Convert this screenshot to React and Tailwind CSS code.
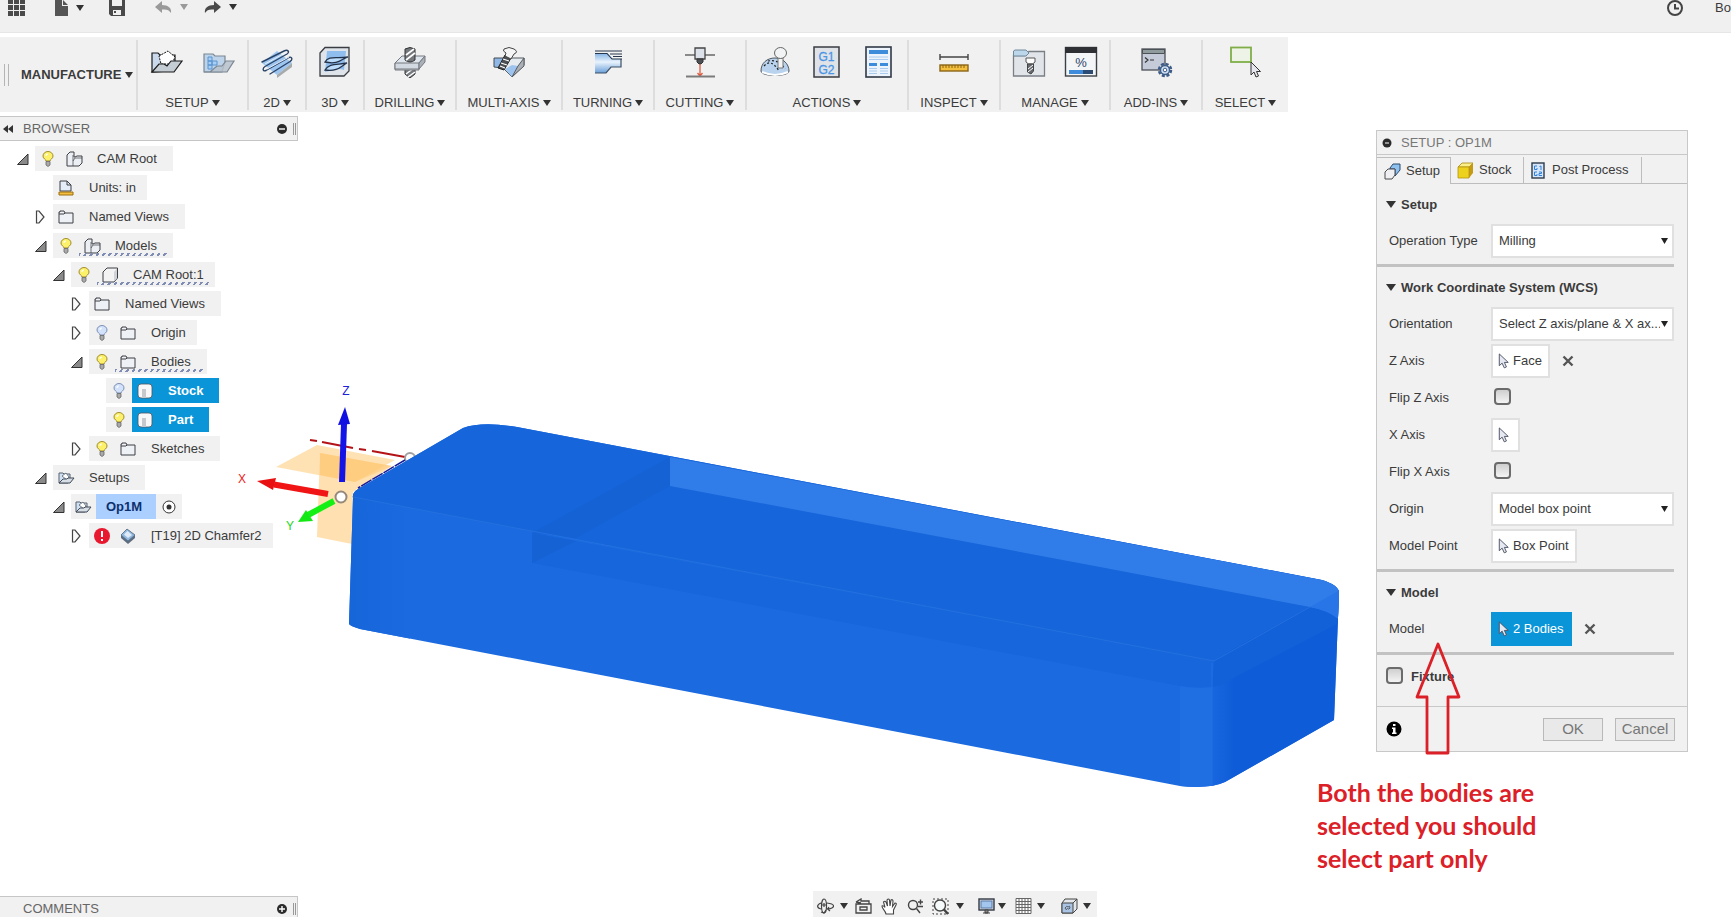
import React from 'react';

const Caret = ({ className = 'h-[6px] w-[8px] fill-[#333]' }) => (
  <svg viewBox="0 0 8 6" preserveAspectRatio="none" className={`shrink-0 ${className}`} aria-hidden="true">
    <path d="M0 0H8L4 6Z" />
  </svg>
);

const Cursor = ({ className = 'h-4 w-3' }) => (
  <svg viewBox="0 0 12 17" className={`shrink-0 ${className}`} aria-hidden="true">
    <path d="M1 1V13.5L4 10.8L6.3 15.8L8.6 14.8L6.4 10H10.5Z" fill="#e6e9f2" stroke="#4b5163" />
  </svg>
);

/* ---------- ribbon icons ---------- */

const NewSetupIcon = () => (
  <svg viewBox="0 0 34 32" className="h-8 w-[34px]" aria-hidden="true">
    <path d="M2 26V7H8L10 9H25V15L20 25Z" fill="#c9d8ea" stroke="#1b1b1b" strokeWidth="1.2" />
    <path d="M9 10L18 5L25 11L22 18H11Z" fill="#fff" stroke="#111" strokeDasharray="2 1" />
    <path d="M2 26L9 18H14L17 20L21 15H32L24 26Z" fill="#c4ccd4" stroke="#1b1b1b" strokeWidth="1.2" />
  </svg>
);

const FolderGridIcon = () => (
  <svg viewBox="0 0 34 32" className="h-8 w-[34px]" aria-hidden="true">
    <path d="M2 26V8H11L13 10H23V16L20 26Z" fill="#bdd3ea" stroke="#7b8794" strokeWidth="1.2" />
    <path d="M6 11H10V15H6ZM6 15H10V19H6ZM10 15H15V19H10ZM6 19H10V23H6Z" fill="#a9cdf3" stroke="#5b94d0" />
    <path d="M2 26H8L15 20H20L24 15H32L25 26Z" fill="#b7c1cb" fillOpacity=".85" stroke="#7b8794" strokeWidth="1.2" />
  </svg>
);

const Milling2DIcon = () => (
  <svg viewBox="0 0 32 32" className="h-8 w-8" aria-hidden="true">
    <path d="M1 17L16 5L31 17L16 29Z" fill="#9dc5f0" />
    <path d="M16 29L31 17V21L16 32Z" fill="#a7abab" />
    <g fill="none" stroke="#2a4468" strokeWidth="1.4" strokeLinecap="round">
      <path d="M1 16L23 5C27 3 29 6 26 8L4 20.500C1 22.500 2 26 5 24.500L28 11.500C31 10 32 14 29 15.500L9 28" />
    </g>
    <path d="M4 18L24 7M6 23L28 11" stroke="#eef5ff" strokeWidth=".9" />
  </svg>
);

const Milling3DIcon = () => (
  <svg viewBox="0 0 32 32" className="h-8 w-8" aria-hidden="true">
    <path d="M1 7L6 1.500H30V25L25 30H1Z" fill="#dfe4ea" stroke="#3a3d42" strokeWidth="1.3" />
    <path d="M8 5H27L25 24C18 21 12 25 6 26Z" fill="#8fbdee" />
    <path d="M6 16C10 9 17 13 29 11C22 13 20 19 6 16ZM6 24C10 17 18 19 28 17C22 20 19 26 6 24Z" fill="#bcdcfb" stroke="#22324a" strokeWidth="1.3" />
  </svg>
);

const DrillIcon = () => (
  <svg viewBox="0 0 32 32" className="h-8 w-8" aria-hidden="true">
    <path d="M11 21H21V28L16 32L11 28Z" fill="#777b80" stroke="#333" />
    <path d="M12 28L20 22M14 31L21 26" stroke="#fff" strokeWidth="1.4" />
    <path d="M1 17L8 10H31L25 17V24H1Z" fill="#dfe6ee" stroke="#74797f" />
    <path d="M1 17H25V23H1Z" fill="#d3d9e0" stroke="#74797f" />
    <path d="M25 17L31 10V16L25 23Z" fill="#a9b0b8" stroke="#74797f" />
    <path d="M11 3Q16 0 21 3V14Q16 18 11 14Z" fill="#74787d" stroke="#333" />
    <path d="M12 9L20 3M12 14L21 7" stroke="#fff" strokeWidth="1.6" />
  </svg>
);

const MultiAxisIcon = () => (
  <svg viewBox="0 0 32 32" className="h-8 w-8" aria-hidden="true">
    <path d="M1 12H12L16 22H10L1 21Z" fill="#8fb8e6" stroke="#444a52" />
    <path d="M10 22L17 12H31V19L19 31Z" fill="#e6ebf0" stroke="#555a60" />
    <path d="M12 23L19 19L25 20L19 31Z" fill="#9cc4ee" />
    <path d="M31 12L25 20L19 31L31 20Z" fill="#aab0b6" stroke="#555a60" />
    <path d="M12 9L18 12L11 24L5 22Z" fill="#4d5054" stroke="#222" />
    <path d="M8 17L14 19M7 20L12 22M10 13L16 15" stroke="#fff" strokeWidth="1.2" />
    <path d="M11 3Q16 0 21 3Q26 6 21 8L18 13L12 10L13 7Q9 5 11 3Z" fill="#f5f5f5" stroke="#444" />
  </svg>
);

const TurningIcon = () => (
  <svg viewBox="0 0 30 32" className="h-8 w-[30px]" aria-hidden="true">
    <defs>
      <linearGradient id="bar" x1="0" y1="0" x2="0" y2="1">
        <stop offset="0" stopColor="#7fb0e3" />
        <stop offset=".45" stopColor="#e9f3fd" />
        <stop offset="1" stopColor="#6a9fd8" />
      </linearGradient>
    </defs>
    <path d="M2 7H14L20 13H28V21H18L13 27H2Z" fill="url(#bar)" />
    <path d="M2 27H13L18 21H28V13" fill="none" stroke="#3f5166" strokeWidth="1.2" />
    <path d="M2 5H29M2 7.500H14L19 13H29M17 8H29M20 10.500H29" fill="none" stroke="#26364c" strokeWidth="1.1" />
  </svg>
);

const CuttingIcon = () => (
  <svg viewBox="0 0 32 32" className="h-8 w-8" aria-hidden="true">
    <path d="M1 9H31" stroke="#444" strokeWidth="1.2" />
    <path d="M11 2H21V13H11Z" fill="#dde1ea" stroke="#444" strokeWidth="1.3" />
    <path d="M13 13H19V16L17 18H15L13 16Z" fill="#4c4f55" stroke="#333" />
    <path d="M16 18V30M13.500 27L16 30L18.500 27" fill="none" stroke="#df5b40" strokeWidth="1.3" />
    <path d="M2 30.500H31" stroke="#7b7b7b" strokeWidth="2" />
  </svg>
);

const SimulateIcon = () => (
  <svg viewBox="0 0 32 32" className="h-8 w-8" aria-hidden="true">
    <path d="M2 25C2 17 8 12 16 12S30 18 30 25C30 31 2 31 2 25Z" fill="#b9d3ee" stroke="#50565e" />
    <path d="M3 26Q16 32 29 26" fill="none" stroke="#fff" strokeWidth="2" />
    <path d="M5 20Q12 12 20 25M9 15Q20 13 26 23" fill="none" stroke="#222" strokeWidth="1.2" strokeDasharray="2 2" />
    <path d="M19 12H24V22H19Z" fill="#f4f4f4" stroke="#777" />
    <ellipse cx="21.500" cy="7" rx="6" ry="5.500" fill="#f1f3f5" stroke="#666" />
  </svg>
);

const PostIcon = () => (
  <svg viewBox="0 0 28 32" className="h-8 w-7" aria-hidden="true">
    <rect x="1" y="1" width="25" height="30" fill="#dfe3e8" stroke="#3a3d42" strokeWidth="1.5" />
    <text x="13.500" y="14.500" textAnchor="middle" fontSize="12" fill="#4a94e6" stroke="#4a94e6" strokeWidth=".3">
      G1
    </text>
    <text x="13.500" y="27.500" textAnchor="middle" fontSize="12" fill="#4a94e6" stroke="#4a94e6" strokeWidth=".3">
      G2
    </text>
  </svg>
);

const SheetIcon = () => (
  <svg viewBox="0 0 28 32" className="h-8 w-7" aria-hidden="true">
    <rect x="1" y="1" width="25" height="30" fill="#edf3fa" stroke="#2f3946" strokeWidth="1.6" />
    <path d="M4 4H23V8H4ZM4 17H12V20H4ZM15 17H23V20H15Z" fill="#3d8cdc" />
    <path d="M4 11H23M4 13.500H23M4 22.500H12M4 25H12M4 27.500H12M15 22.500H23M15 25H23M15 27.500H23" stroke="#a9cbef" strokeWidth="1.2" />
  </svg>
);

const MeasureIcon = () => (
  <svg viewBox="0 0 32 32" className="h-8 w-8" aria-hidden="true">
    <path d="M2 8V14M30 8V14M2 11H30" stroke="#444" strokeWidth="1.4" fill="none" />
    <rect x="2" y="19" width="28" height="6" fill="#f4bf3c" stroke="#8a6416" strokeWidth="1.4" />
    <path d="M5 19V22M8 19V22M11 19V22M14 19V22M17 19V22M20 19V22M23 19V22M26 19V22" stroke="#8a6416" />
  </svg>
);

const ToolLibraryIcon = () => (
  <svg viewBox="0 0 34 32" className="h-8 w-[34px]" aria-hidden="true">
    <path d="M1.500 9.500H13L17 5.500H32.500V30H1.500Z" fill="#e1e5e9" stroke="#7a7f86" strokeWidth="1.3" />
    <path d="M1.500 5L3 4H14L17 7L14 10H1.500Z" fill="#bcd6ea" stroke="#70889c" />
    <path d="M14 12H23V16L20.500 18H16.500L14 16Z" fill="#fff" stroke="#555" />
    <path d="M15.500 18H21.500V25L19 28L15.500 26Z" fill="#666a6f" stroke="#444" />
    <path d="M16 23L21 19M16 26L21 22" stroke="#fff" />
  </svg>
);

const PercentIcon = () => (
  <svg viewBox="0 0 34 32" className="h-8 w-[34px]" aria-hidden="true">
    <rect x="1.500" y="1.500" width="31" height="28.500" fill="#f3f5f7" stroke="#3d4147" strokeWidth="1.4" />
    <path d="M1 1H33V7H1Z" fill="#2e3035" />
    <text x="17" y="21" textAnchor="middle" fontSize="13" fill="#2c4668">
      %
    </text>
    <path d="M5 24H19V28H5Z" fill="#3f8bdb" />
    <path d="M19 24H29V28H19Z" fill="#2c4c74" />
  </svg>
);

const AddInsIcon = () => (
  <svg viewBox="0 0 34 32" className="h-8 w-[34px]" aria-hidden="true">
    <rect x="3" y="3" width="23" height="21" fill="#c5cbd9" stroke="#4c5158" strokeWidth="1.3" />
    <path d="M3.500 3.500H25.500V7.500H3.500Z" fill="#8f9b9c" stroke="#4c5158" />
    <path d="M6 11.500L9 14L6 16.500M11 14H15" fill="none" stroke="#333" strokeWidth="1.2" />
    <circle cx="26" cy="24" r="6" fill="none" stroke="#3d5c86" strokeWidth="2.500" strokeDasharray="3 1.700" />
    <circle cx="26" cy="24" r="4.500" fill="#cfe0f5" stroke="#3d5c86" strokeWidth="1.400" />
    <circle cx="26" cy="24" r="1.800" fill="#fff" stroke="#3d5c86" />
  </svg>
);

const SelectIcon = () => (
  <svg viewBox="0 0 34 32" className="h-8 w-[34px]" aria-hidden="true">
    <rect x="2" y="1.500" width="20" height="14.500" fill="#eef3e8" stroke="#7fae48" strokeWidth="1.800" />
    <path d="M22 16V29L25 26L27 31L29.500 30L27.500 25.500H31.500Z" fill="#e6e6ee" stroke="#333" />
  </svg>
);

const ribbon = [
  { label: 'SETUP', width: 'w-[111px]', icons: [NewSetupIcon, FolderGridIcon] },
  { label: '2D', width: 'w-[58px]', icons: [Milling2DIcon] },
  { label: '3D', width: 'w-[58px]', icons: [Milling3DIcon] },
  { label: 'DRILLING', width: 'w-[92px]', icons: [DrillIcon] },
  { label: 'MULTI-AXIS', width: 'w-[106px]', icons: [MultiAxisIcon] },
  { label: 'TURNING', width: 'w-[92px]', icons: [TurningIcon] },
  { label: 'CUTTING', width: 'w-[92px]', icons: [CuttingIcon] },
  { label: 'ACTIONS', width: 'w-[162px]', icons: [SimulateIcon, PostIcon, SheetIcon] },
  { label: 'INSPECT', width: 'w-[92px]', icons: [MeasureIcon] },
  { label: 'MANAGE', width: 'w-[110px]', icons: [ToolLibraryIcon, PercentIcon] },
  { label: 'ADD-INS', width: 'w-[92px]', icons: [AddInsIcon] },
  { label: 'SELECT', width: 'w-[87px]', icons: [SelectIcon] },
];

const QuickBar = () => (
  <header className="flex h-[33px] items-start border-b border-[#e6e6e6] bg-[#f0f0f0] pl-2">
    <button aria-label="Data panel" className="w-[17px]">
      <svg viewBox="0 0 17 16" className="h-4 w-[17px] fill-[#4a4a4a]">
        <path d="M0 0H5V4H0ZM6 0H11V4H6ZM12 0H17V4H12ZM0 5H5V10H0ZM6 5H11V10H6ZM12 5H17V10H12ZM0 11H5V16H0ZM6 11H11V16H6ZM12 11H17V16H12Z" />
      </svg>
    </button>
    <button aria-label="File" className="ml-[30px] flex items-center gap-2">
      <svg viewBox="0 0 13 16" className="h-4 w-[13px] fill-[#555]">
        <path d="M0 0H7V6H13V16H0ZM8 0L13 5H8Z" />
      </svg>
      <Caret />
    </button>
    <button aria-label="Save" className="ml-[25px]">
      <svg viewBox="0 0 16 16" className="h-4 w-4">
        <path d="M0 0H16V16H2L0 14Z" fill="#4a4a4a" />
        <path d="M3 0H13V6H3ZM4 10H12V15H4Z" fill="#f0f0f0" />
        <path d="M5 11H7V13H5Z" fill="#4a4a4a" />
      </svg>
    </button>
    <button aria-label="Undo" className="ml-[30px] flex items-center gap-2">
      <svg viewBox="0 0 17 14" className="h-[14px] w-[17px] fill-[#999]">
        <path d="M0 7L7 1V5C13 5 17 8 16 13C14 10 12 9 7 9.500V13Z" />
      </svg>
      <Caret className="h-[6px] w-[8px] fill-[#999]" />
    </button>
    <button aria-label="Redo" className="ml-4 flex items-center gap-2">
      <svg viewBox="0 0 17 14" className="h-[14px] w-[17px] fill-[#4a4a4a]">
        <path d="M17 7L10 1V5C4 5 0 8 1 13C3 10 5 9 10 9.500V13Z" />
      </svg>
      <Caret />
    </button>
    <div className="ml-auto flex items-start gap-8">
      <button aria-label="Job status">
        <svg viewBox="0 0 16 16" className="h-4 w-4 fill-none stroke-[#444] stroke-2">
          <circle cx="8" cy="8" r="7" />
          <path d="M8 4V8.500H12" />
        </svg>
      </button>
      <span className="text-[13px] leading-4">Bo</span>
    </div>
  </header>
);

const Ribbon = () => (
  <div className="mt-1 flex h-[75px] w-fit bg-[#f1f1f1]">
    <div className="flex w-[136px] items-center pl-1">
      <span className="h-[22px] w-[5px] border-x border-[#b5b5b5]" />
      <button className="ml-3 flex items-center gap-1 pt-px text-[13px] font-bold">
        MANUFACTURE
        <Caret />
      </button>
    </div>
    {ribbon.map(({ label, width, icons }) => (
      <div key={label} className={`mt-[3px] mb-[2px] flex flex-col items-center justify-between border-l-2 border-[#dddddd] pt-[6px] ${width}`}>
        <div className="flex gap-[18px]">
          {icons.map((Icon, i) => (
            <button key={i} aria-label={`${label} ${i + 1}`} className="flex w-[34px] justify-center">
              <Icon />
            </button>
          ))}
        </div>
        <button className="flex items-center gap-[3px] text-[13px] leading-[14px]">
          {label}
          <Caret />
        </button>
      </div>
    ))}
  </div>
);

/* ---------- browser tree ---------- */

const Bulb = ({ off }) => (
  <svg viewBox="0 0 12 16" className="h-4 w-3 shrink-0" aria-hidden="true">
    <path d="M4 10C4 8 1 8 1 5A5 4.500 0 0 1 11 5C11 8 8 8 8 10Z" fill={off ? '#d3e2fb' : '#fdf06a'} stroke={off ? '#7d8eb5' : '#a08d2e'} />
    <path d="M4 10.500H8V14L6 15.500L4 14Z" fill="#aaa" stroke="#666" strokeWidth=".8" />
    <path d="M4 5Q4 3 6 3" fill="none" stroke="#fff" strokeWidth="1.2" />
  </svg>
);

const treeIcons = {
  component: (
    <>
      <path d="M1 4L4 1H8V6L9 6L11 5H16V12L13 15H1Z" fill="#eceff4" stroke="#3c3f44" />
      <path d="M7 10L9 7H16M7 4V15" fill="none" stroke="#3c3f44" strokeWidth=".7" />
    </>
  ),
  units: (
    <>
      <path d="M2 1H9L13 5V11H2Z" fill="#e4edf8" stroke="#3c3f44" />
      <path d="M9 1V5H13" fill="none" stroke="#3c3f44" />
      <path d="M1 12H15V15H1Z" fill="#f4bf3c" stroke="#9a6d10" />
    </>
  ),
  folder: <path d="M1 14V3H2V2H6L7 4H15V14H1M1 5H6L7 4" fill="#eef1f6" stroke="#3c3f44" />,
  box: (
    <>
      <path d="M1 5L5 1H15.500V11L12 15H1Z" fill="#f3f3f3" stroke="#3c3f44" />
      <path d="M12 5L15 1.500V11L12 14.500Z" fill="#cfd2d6" />
    </>
  ),
  body: (
    <>
      <path d="M1 4Q1 1 4 1H12Q15 1 15 4V12Q15 15 12 15H4Q1 15 1 12Z" fill="#f8f8f8" stroke="#4b5560" strokeWidth=".8" />
      <path d="M5 6H9V15H5Z" fill="#c5c8cc" />
    </>
  ),
  setup: (
    <>
      <path d="M1 13V3H5L6 4H12V8L10 13Z" fill="#cfe0f2" stroke="#56616e" />
      <path d="M4 6L8 3L11 7L9 10Z" fill="#fff" stroke="#56616e" strokeWidth=".8" />
      <path d="M1 13L5 9H9L10 8H16L12 13Z" fill="#d7dee6" stroke="#3f4a56" />
    </>
  ),
  chamfer: (
    <>
      <path d="M1 7L7 1L15 7V10L8 16L1 10Z" fill="#5c6d80" />
      <path d="M1 7L7 1L15 7L8 13Z" fill="#8fb9e3" stroke="#5c6d80" strokeWidth=".8" />
      <path d="M4 6.500L7.500 3L12 7L8 10Z" fill="#dfeaf5" />
    </>
  ),
};

const TreeIcon = ({ name }) => (
  <svg viewBox="0 0 17 16" className="h-4 w-[17px] shrink-0" aria-hidden="true">
    {treeIcons[name]}
  </svg>
);

const Toggle = ({ open, label }) => (
  <button aria-label={`Toggle ${label}`} aria-expanded={open} className="w-[18px] shrink-0">
    {open ? (
      <svg viewBox="0 0 12 12" className="h-3 w-3">
        <path d="M0.500 11.500L11 1V11.500Z" fill="#8a8a8a" stroke="#333" />
      </svg>
    ) : (
      <svg viewBox="0 0 12 14" className="h-[14px] w-3">
        <path d="M1.500 1H4L9 7L4 13H1.500Z" fill="#fafafa" stroke="#444" strokeWidth="1.2" />
      </svg>
    )}
  </button>
);

const rows = [
  { label: 'CAM Root', indent: 'pl-[17px]', open: true, bulb: 'on', icon: 'component' },
  { label: 'Units: in', indent: 'pl-[53px]', icon: 'units', tight: true },
  { label: 'Named Views', indent: 'pl-[35px]', open: false, icon: 'folder' },
  { label: 'Models', indent: 'pl-[35px]', open: true, bulb: 'on', icon: 'component', dashed: true },
  { label: 'CAM Root:1', indent: 'pl-[53px]', open: true, bulb: 'on', icon: 'box', dashed: true, tight: true },
  { label: 'Named Views', indent: 'pl-[71px]', open: false, icon: 'folder' },
  { label: 'Origin', indent: 'pl-[71px]', open: false, bulb: 'off', icon: 'folder', tight: true },
  { label: 'Bodies', indent: 'pl-[71px]', open: true, bulb: 'on', icon: 'folder', dashed: true },
  { label: 'Stock', indent: 'pl-[106px]', bulb: 'off', icon: 'body', selected: true },
  { label: 'Part', indent: 'pl-[106px]', bulb: 'on', icon: 'body', selected: true },
  { label: 'Sketches', indent: 'pl-[71px]', open: false, bulb: 'on', icon: 'folder' },
  { label: 'Setups', indent: 'pl-[35px]', open: true, icon: 'setup' },
  { label: 'Op1M', indent: 'pl-[53px]', open: true, icon: 'setup', active: true },
  { label: '[T19] 2D Chamfer2', indent: 'pl-[71px]', open: false, error: true, icon: 'chamfer', tight: true },
];

const TreeRow = ({ row }) => (
  <li className={`flex h-[25px] items-center ${row.indent}`}>
    {row.open !== undefined && <Toggle open={row.open} label={row.label} />}
    <div className="relative flex h-full items-center bg-[#f1f1f1]">
      {row.bulb && (
        <span className="flex w-[26px] justify-center">
          <Bulb off={row.bulb === 'off'} />
        </span>
      )}
      {row.error && (
        <span className="flex w-[26px] justify-center">
          <svg viewBox="0 0 16 16" className="h-4 w-4" aria-hidden="true">
            <circle cx="8" cy="8" r="8" fill="#e8192f" />
            <path d="M7 3H9V9H7ZM7 11H9V13H7Z" fill="#fff" />
          </svg>
        </span>
      )}
      {row.active ? (
        <>
          <span className="px-1">
            <TreeIcon name={row.icon} />
          </span>
          <a href="#op1m" className="flex h-full items-center bg-[#abd0ff] px-[14px] pl-[10px] font-bold text-[#0d2f6e]">
            {row.label}
          </a>
          <svg viewBox="0 0 14 14" className="mx-[6px] h-[14px] w-[14px]" aria-hidden="true">
            <circle cx="7" cy="7" r="6" fill="#fff" stroke="#333" />
            <circle cx="7" cy="7" r="2.500" fill="#333" />
          </svg>
        </>
      ) : (
        <span
          className={`flex h-full items-center gap-[14px] pl-[5px] ${row.tight ? 'pr-[11px]' : 'pr-4'} ${
            row.selected ? 'bg-[#0a95d9] font-bold text-white' : ''
          }`}
        >
          <TreeIcon name={row.icon} />
          {row.label}
        </span>
      )}
      {row.dashed && (
        <span className="absolute right-1 bottom-[2px] left-[26px] h-[3px] bg-[repeating-linear-gradient(125deg,#7f8db5_0_2px,transparent_2px_5px)]" />
      )}
    </div>
  </li>
);

const RoundButton = ({ label, plus }) => (
  <button aria-label={label} className="ml-auto">
    <svg viewBox="0 0 10 10" className="h-[10px] w-[10px]">
      <circle cx="5" cy="5" r="5" fill="#2b2b2b" />
      <path d={plus ? 'M2 5H8M5 2V8' : 'M2 5H8'} stroke="#fff" strokeWidth="1.4" />
    </svg>
  </button>
);

const Browser = () => (
  <section className="relative mt-1 w-[298px] text-[13px]">
    <div className="flex h-[25px] items-center border border-l-0 border-[#c6c6c6] bg-[#f1f1f1] pl-[3px] text-[#666]">
      <svg viewBox="0 0 10 8" className="h-2 w-[10px] fill-[#333]" aria-hidden="true">
        <path d="M5 0V8L0 4ZM10 0V8L5 4Z" />
      </svg>
      <h2 className="ml-[10px]">BROWSER</h2>
      <RoundButton label="Collapse browser" />
      <span className="mr-px ml-[6px] h-3 w-[3px] border-x border-[#999]" />
    </div>
    <ul className="mt-[5px] flex flex-col gap-1">
      {rows.map((row, i) => (
        <TreeRow key={i} row={row} />
      ))}
    </ul>
  </section>
);

/* ---------- 3D scene ---------- */

const Scene = () => (
  <svg viewBox="0 112 1731 779" className="absolute inset-0 h-full w-full" role="img" aria-label="Model view">
    <defs>
      <linearGradient id="leftEdge" x1="350" x2="410" y1="0" y2="0" gradientUnits="userSpaceOnUse">
        <stop offset="0" stopColor="#1665d9" />
        <stop offset="1" stopColor="#1b6ae0" />
      </linearGradient>
      <linearGradient id="corner" x1="1212" x2="1234" y1="0" y2="0" gradientUnits="userSpaceOnUse">
        <stop offset="0" stopColor="#1967df" />
        <stop offset="1" stopColor="#0f5cd8" />
      </linearGradient>
      <clipPath id="solid">
        <path d="M353 498Q352 493 358 489L463 428Q482 421 517 427L1322 580Q1338 585 1339 592L1334 720L1225 782Q1210 789 1180 786L360 629Q350 626 349 624Z" />
      </clipPath>
    </defs>

    {/* origin planes */}
    <path d="M276 467L317 445L395 460L355 482Z" fill="#ffd28a" fillOpacity=".65" />
    <path d="M320 453L392 466L353 492L352 544L317 537Z" fill="#ffcf85" fillOpacity=".65" />
    <path d="M320 453L392 466L355 482L320 475Z" fill="#ffc060" fillOpacity=".4" />
    <path d="M310 440L317 441M322 442L353 448M359 449L366 450M372 451L405 457" stroke="#b31217" strokeWidth="2" />
    <circle cx="410" cy="458" r="5" fill="#fff" stroke="#a0a0a0" strokeWidth="2" />

    {/* body */}
    <g clipPath="url(#solid)">
      <path d="M340 410H1350V800H340Z" fill="#1b6ae0" />
      <path d="M349 490H410V660H349Z" fill="url(#leftEdge)" />
      <path d="M340 495L353 497L1214 661L1345 588V400H340Z" fill="#1665da" />
      <path d="M532 533L670 457V486L576 538Z" fill="#1562d5" />
      <path d="M532 533L1214 661V687Q1195 689 1180 686L532 563Z" fill="#1766db" />
      <path d="M532 533V563L576 541Z" fill="#1562d5" />
      <path d="M1180 686Q1196 689 1212 687V800H1180Z" fill="#1f6ee2" />
      <path d="M1212 661L1345 587V740L1212 800Z" fill="url(#corner)" />
      <path d="M1214 661L1345 587V620L1235 677Q1222 686 1212 687Z" fill="#1361d8" />
      <path d="M670 457L1322 580L1345 580V622Q1332 611 1310 607L1100 567L670 486Z" fill="#307ce9" />
      <path d="M1310 607L1345 587V625Q1332 611 1310 607Z" fill="#2875e8" />
      <path d="M353 497L1214 661L1310 607" fill="none" stroke="#2470de" />
      <path d="M1212 663V786" stroke="#2571e3" />
    </g>
    <path d="M405 460L358 488" stroke="#161c9a" strokeWidth="1.500" strokeDasharray="12 1" />

    {/* axes */}
    <path d="M342 482L344 424" stroke="#1414e6" strokeWidth="6" />
    <path d="M345 407L338 425L350 424Z" fill="#1010e0" />
    <path d="M328 494L274 484.500" stroke="#f01414" strokeWidth="6" />
    <path d="M257 481L276 478L273 490Z" fill="#e81010" />
    <path d="M334 501L308 515" stroke="#14f014" strokeWidth="6" />
    <path d="M298 522L306 510L313 521Z" fill="#14e814" />
    <circle cx="341" cy="497" r="5.500" fill="#fff" stroke="#94897a" strokeWidth="2" />
    <g fontSize="12" textAnchor="middle">
      <text x="346" y="395" fill="#2020d8">Z</text>
      <text x="242" y="483" fill="#f02020">X</text>
      <text x="290" y="530" fill="#18d818">Y</text>
    </g>
  </svg>
);

/* ---------- setup dialog ---------- */

const SectionTitle = ({ children }) => (
  <h3 className="flex h-10 items-center gap-[5px] pt-px pl-[9px] font-bold">
    <Caret className="h-[7px] w-[10px] fill-[#333]" />
    {children}
  </h3>
);

const Field = ({ label, htmlFor, children }) => (
  <div className="flex h-[34px] items-center">
    <label htmlFor={htmlFor} className="w-[114px] shrink-0 pl-3">
      {label}
    </label>
    {children}
  </div>
);

const Divider = () => <hr className="mt-[6px] mr-[13px] border-t-[3px] border-[#c2c2c2]" />;

const Dropdown = ({ id, value }) => (
  <div className="relative mr-[13px] flex-1">
    <select id={id} className="h-[34px] w-full appearance-none border-2 border-[#e0e0e0] bg-white pr-3 pl-[6px]">
      <option>{value}</option>
    </select>
    <span className="pointer-events-none absolute inset-y-0 right-[6px] flex items-center">
      <Caret className="h-[6px] w-[7px] fill-[#222]" />
    </span>
  </div>
);

const Picker = ({ id, children }) => (
  <button id={id} className="flex h-[34px] min-w-[29px] items-center gap-[3px] border-2 border-[#e0e0e0] bg-white pr-[6px] pl-[5px]">
    <Cursor />
    {children}
  </button>
);

const Clear = ({ label }) => (
  <button aria-label={label} className="ml-3">
    <svg viewBox="0 0 12 12" className="h-3 w-3 stroke-[#555]">
      <path d="M1.500 1.500L10.500 10.500M10.500 1.500L1.500 10.500" strokeWidth="2.400" />
    </svg>
  </button>
);

const Checkbox = ({ id }) => (
  <input
    id={id}
    type="checkbox"
    className="h-[17px] w-[17px] appearance-none rounded-[4px] border-2 border-[#6b6b6b] bg-linear-to-b from-[#cfcfcf] to-[#f4f4f4]"
  />
);

const SetupDialog = () => (
  <section className="ml-auto w-[312px] border border-[#c8c8c8] bg-[#f1f1f1] text-[13px]">
    <div className="flex h-6 items-center border-b border-[#c8c8c8] pl-[5px] text-[#777]">
      <svg viewBox="0 0 10 10" className="h-[10px] w-[10px]" aria-hidden="true">
        <circle cx="5" cy="5" r="4.500" fill="#2b2b2b" />
        <path d="M3 5H7" stroke="#fff" />
      </svg>
      <h2 className="ml-[9px]">SETUP : OP1M</h2>
    </div>
    <div role="tablist" className="flex h-[29px] items-stretch pt-[2px]">
      <button role="tab" aria-selected="true" className="flex w-[74px] items-center gap-[5px] border-t border-r border-[#bdbdbd] pl-[7px]">
        <svg viewBox="0 0 17 17" className="h-[17px] w-[17px]" aria-hidden="true">
          <path d="M6 5L9 1H16V7L11 13V6H6Z" fill="#8ec1ee" stroke="#2c4a6b" />
          <path d="M1 9L4 6H11V12L8 16H1Z" fill="#f0f0f2" stroke="#4a4a50" />
        </svg>
        Setup
      </button>
      <button role="tab" aria-selected="false" className="flex w-[73px] items-center gap-[5px] border-r border-b border-[#bdbdbd] pl-[6px]">
        <svg viewBox="0 0 17 17" className="h-[17px] w-[17px]" aria-hidden="true">
          <path d="M1 5L5 1H16L12 5Z" fill="#faf08a" stroke="#a8860c" strokeWidth=".8" />
          <path d="M12 5L16 1V11L12 16Z" fill="#c79a14" />
          <path d="M1 5H12V16H1Z" fill="#ecd21c" stroke="#b8950f" strokeWidth=".8" />
        </svg>
        Stock
      </button>
      <button role="tab" aria-selected="false" className="flex w-[118px] items-center gap-[7px] border-r border-b border-[#bdbdbd] pl-[7px]">
        <svg viewBox="0 0 14 17" className="h-[17px] w-[14px]" aria-hidden="true">
          <rect x="1" y="1" width="12" height="15" fill="#d6e6f8" stroke="#2d3a4a" strokeWidth="1.400" />
          <path d="M6 4H3.500V7.500H6V6M8.500 4.500L10 4V8M6 10H3.500V13.500H6V12M8 10H10.500V11.500H8V13.500H11" fill="none" stroke="#2f80da" />
        </svg>
        Post Process
      </button>
      <span className="flex-1 border-b border-[#bdbdbd]" />
    </div>

    <SectionTitle>Setup</SectionTitle>
    <Field label="Operation Type" htmlFor="operation">
      <Dropdown id="operation" value="Milling" />
    </Field>
    <Divider />

    <SectionTitle>Work Coordinate System (WCS)</SectionTitle>
    <div className="flex flex-col gap-[3px]">
      <Field label="Orientation" htmlFor="orientation">
        <Dropdown id="orientation" value="Select Z axis/plane &amp; X ax..." />
      </Field>
      <Field label="Z Axis" htmlFor="z-axis">
        <Picker id="z-axis">Face</Picker>
        <Clear label="Clear Z axis" />
      </Field>
      <Field label="Flip Z Axis" htmlFor="flip-z">
        <span className="flex pb-[3px] pl-[3px]">
          <Checkbox id="flip-z" />
        </span>
      </Field>
      <Field label="X Axis" htmlFor="x-axis">
        <Picker id="x-axis" />
      </Field>
      <Field label="Flip X Axis" htmlFor="flip-x">
        <span className="flex pb-[3px] pl-[3px]">
          <Checkbox id="flip-x" />
        </span>
      </Field>
      <Field label="Origin" htmlFor="origin">
        <Dropdown id="origin" value="Model box point" />
      </Field>
      <Field label="Model Point" htmlFor="model-point">
        <Picker id="model-point">Box Point</Picker>
      </Field>
    </div>
    <Divider />

    <SectionTitle>Model</SectionTitle>
    <Field label="Model" htmlFor="model">
      <button id="model" className="flex h-[34px] items-center gap-[3px] bg-[#0a95d9] pr-2 pl-[7px] text-white">
        <Cursor />2 Bodies
      </button>
      <Clear label="Clear model" />
    </Field>
    <Divider />

    <div className="flex h-[51px] items-start gap-2 pt-3 pl-[9px]">
      <Checkbox id="fixture" />
      <label htmlFor="fixture" className="font-bold">
        Fixture
      </label>
    </div>

    <div className="flex h-[45px] items-center border-t border-[#c8c8c8] pr-3 pl-[9px] text-[15px] text-[#777]">
      <svg viewBox="0 0 16 16" className="mr-auto h-4 w-4" aria-hidden="true">
        <circle cx="8" cy="8" r="7.500" fill="#000" />
        <path d="M7 3H9.500V5H7ZM6 6.500H9.500V11.500H10.500V13H6V11.500H7V8H6Z" fill="#fff" />
      </svg>
      <button className="h-[23px] w-[60px] border border-[#b9b9b9] bg-[#e9e9e9] leading-5">OK</button>
      <button className="ml-3 h-[23px] w-[60px] border border-[#b9b9b9] bg-[#e9e9e9] leading-5">Cancel</button>
    </div>
  </section>
);

/* ---------- view controls ---------- */

const NavBar = () => (
  <nav className="flex h-[26px] w-[284px] items-center bg-[#f1f1f1] pt-1 pl-1">
    <button aria-label="Orbit" className="flex items-center gap-[6px]">
      <svg viewBox="0 0 17 16" className="h-4 w-[17px] fill-none stroke-[#444] stroke-[1.2]">
        <ellipse cx="7" cy="8" rx="2.500" ry="7" />
        <path d="M10 5C19 6 18 10 11 11M4 5C-1 7 0 10 4 11M4 14L7 15L9 12M12 9L10.500 11L13 13M7 5V9M5 7H9" />
      </svg>
      <Caret />
    </button>
    <button aria-label="Look at" className="ml-[7px]">
      <svg viewBox="0 0 17 16" className="h-4 w-[17px] fill-none stroke-[#444] stroke-[1.3]">
        <path d="M1 6H16V15H1ZM5 9H12V12H5ZM1 4L6 1V3H14V6M1 4L6 5" />
      </svg>
    </button>
    <button aria-label="Pan" className="ml-[9px]">
      <svg viewBox="0 0 17 17" className="h-[17px] w-[17px] fill-white stroke-[#444] stroke-[1.1]">
        <path d="M5 16C4 12 1 11 1 8Q2 7 4 9.500L2.500 4Q4 2.500 5 4L6.500 8L6 2Q7.500 0 8.500 2L9 8L10 2Q11.500 1 12 3L11.500 8.500L14 5Q16 5 15 7L12.500 12V16Z" />
      </svg>
    </button>
    <button aria-label="Zoom" className="ml-[9px]">
      <svg viewBox="0 0 17 16" className="h-4 w-[17px] fill-none stroke-[#444] stroke-[1.4]">
        <circle cx="6" cy="7" r="4.500" />
        <path d="M9.500 10.500L13 15M11 4H16M13.500 1.500V6.500M11 8.500H16" />
      </svg>
    </button>
    <button aria-label="Zoom window" className="ml-2 flex items-center gap-[6px]">
      <svg viewBox="0 0 18 17" className="h-[17px] w-[18px] fill-none stroke-[#444]">
        <path d="M1 1H16V16H1Z" strokeDasharray="2 2" />
        <circle cx="8" cy="7.500" r="5.500" fill="#f7fafa" strokeWidth="1.400" />
        <path d="M11.500 11L16 16" strokeWidth="2.500" />
      </svg>
      <Caret />
    </button>
    <button aria-label="Display settings" className="ml-[14px] flex items-center gap-[3px]">
      <svg viewBox="0 0 17 16" className="h-4 w-[17px]">
        <rect x="1" y="1" width="15" height="11" fill="#d8dde3" stroke="#333a44" strokeWidth="1.400" />
        <rect x="3" y="3" width="11" height="7" fill="#a3c6ee" stroke="#5878a5" />
        <path d="M7 12H10V15H7ZM5 15H12" fill="#888" stroke="#444" />
      </svg>
      <Caret />
    </button>
    <button aria-label="Grid and snaps" className="ml-[9px] flex items-center gap-[5px]">
      <svg viewBox="0 0 17 16" className="h-4 w-[17px] fill-white stroke-[#666]">
        <path d="M1 .5H16V15.500H1ZM4 .5V15.500M7 .5V15.500M10 .5V15.500M13 .5V15.500M1 3.500H16M1 6.500H16M1 9.500H16M1 12.500H16" />
      </svg>
      <Caret />
    </button>
    <button aria-label="Viewports" className="ml-4 flex items-center gap-[5px]">
      <svg viewBox="0 0 17 16" className="h-4 w-[17px] stroke-[#444]">
        <path d="M1 5L4 1H16V11L12 15H1Z" fill="#e3e6ea" />
        <path d="M1 5H12V15H1ZM12 5L16 1" fill="#a9c4e4" />
        <path d="M4 10Q6 7 7 9Q9 7 9 10Q8 12 6.500 10.500Q5 13 4 10Z" fill="none" strokeWidth=".8" />
      </svg>
      <Caret />
    </button>
  </nav>
);

const App = () => {
  return (
    <div className="flex min-h-screen flex-col overflow-hidden bg-white font-['Liberation_Sans',Arial,sans-serif] text-[#3b3b3b]">
      <QuickBar />
      <Ribbon />

      <main className="relative flex flex-1 items-start justify-between">
        <Scene />
        <Browser />

        <aside className="relative mt-[18px] mr-[43px] w-[371px]">
          <SetupDialog />
          {/* callout arrow over the dialog */}
          <svg viewBox="0 0 46 114" className="absolute top-[511px] left-[98px] h-[114px] w-[46px]" aria-hidden="true">
            <path d="M23 3L44 56H33V112H12V56H2Z" fill="none" stroke="#dc2027" strokeWidth="2.800" strokeLinejoin="round" />
          </svg>
          <p className="mt-6 w-[260px] font-[Lato,sans-serif] text-[25px] leading-[33px] font-bold text-[#dc2027]">
            Both the bodies are selected you should select part only
          </p>
        </aside>
      </main>

      <footer className="relative flex h-[26px] items-end">
        <div className="flex h-[21px] w-[298px] items-center border border-b-0 border-l-0 border-[#c6c6c6] bg-[#f1f1f1] pt-1 pl-[23px] text-[13px] text-[#666]">
          <h2>COMMENTS</h2>
          <RoundButton label="Expand comments" plus />
          <span className="mr-px ml-[6px] h-3 w-[3px] border-x border-[#999]" />
        </div>
        <div className="flex flex-1 justify-center pr-30">
          <NavBar />
        </div>
      </footer>
    </div>
  );
};

export default App;
